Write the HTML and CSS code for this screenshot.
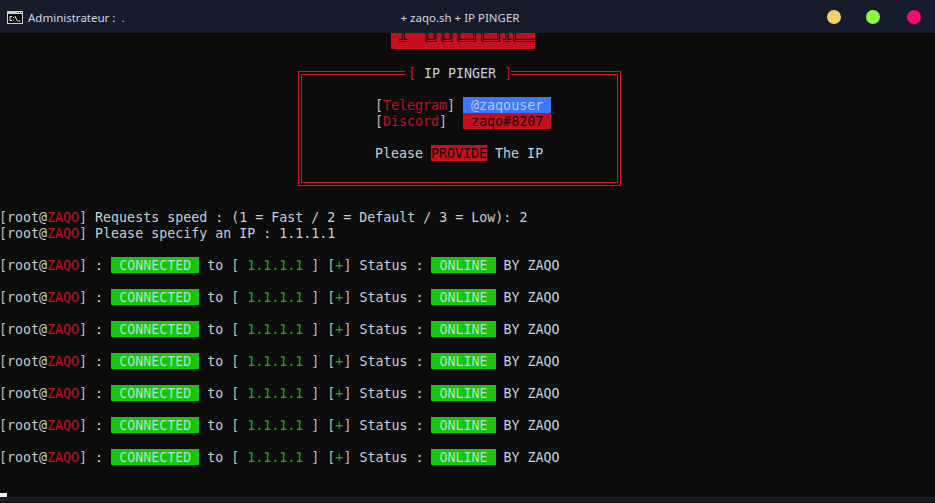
FILE: index.html
```html
<!DOCTYPE html>
<html lang="fr">
<head>
<meta charset="utf-8">
<title>zaqo.sh IP PINGER</title>
<link rel="stylesheet" href="styles.css">
</head>
<body>
<div class="window">
  <header class="titlebar">
    <div class="title-left">
      <svg class="cmd-icon" width="16" height="13" viewBox="0 0 16 13" aria-hidden="true">
        <rect x="0" y="0" width="16" height="13" fill="#d0d0d0"/>
        <rect x="1" y="3" width="14" height="9" fill="#0c0c0c"/>
        <rect x="10" y="1" width="1" height="1" fill="#333"/><rect x="12" y="1" width="1" height="1" fill="#333"/><rect x="14" y="1" width="1" height="1" fill="#333"/>
        <path d="M5 5.5H3V9.5H5M6.5 6V7M6.5 8.5V9.5M8 5L10 9.5M10.5 10H13.5" fill="none" stroke="#f0f0f0" stroke-width="1"/>
      </svg>
      <span>Administrateur :&nbsp; .</span>
    </div>
    <div class="title-center">+ zaqo.sh + IP PINGER</div>
    <div class="dots">
      <span class="dot dot-yellow"></span>
      <span class="dot dot-green"></span>
      <span class="dot dot-pink"></span>
    </div>
  </header>
  <main class="terminal">
    <div class="banner-row"><span class="banner"> ╩  ╚╝╚╝╚═╝╚═╝╩╚══ </span></div>
    <section class="frame">
      <div class="legend"><span class="red">[</span> IP PINGER <span class="red">]</span></div>
      <div class="line"><span class="tan">[</span><span class="dim">Telegram</span><span class="tan">]</span> <span class="tag tag-blue"> @zaqouser </span></div>
      <div class="line"><span class="tan">[</span><span class="dim">Discord</span><span class="tan">]</span>  <span class="tag tag-red"> zaqo#8207 </span></div>
      <div class="line blank"></div>
      <div class="line">Please <span class="tag tag-red">PROVIDE</span> The IP</div>
    </section>
    <div class="log">
      <div class="line"><span class="tan">[</span>root@<span class="dim">ZAQO</span><span class="tan">]</span> Requests speed : (1 = Fast / 2 = Default / 3 = Low): 2</div>
      <div class="line"><span class="tan">[</span>root@<span class="dim">ZAQO</span><span class="tan">]</span> Please specify an IP : 1.1.1.1</div>
    </div>
    <div class="log pings">
      <div class="line"><span class="tan">[</span>root@<span class="dim">ZAQO</span><span class="tan">]</span> : <span class="tag tag-green"> CONNECTED </span> to <span class="tan">[</span> <span class="ip">1.1.1.1</span> <span class="tan">]</span> <span class="tan">[</span><span class="ip">+</span><span class="tan">]</span> Status : <span class="tag tag-green"> ONLINE </span> BY ZAQO</div>
      <div class="line"><span class="tan">[</span>root@<span class="dim">ZAQO</span><span class="tan">]</span> : <span class="tag tag-green"> CONNECTED </span> to <span class="tan">[</span> <span class="ip">1.1.1.1</span> <span class="tan">]</span> <span class="tan">[</span><span class="ip">+</span><span class="tan">]</span> Status : <span class="tag tag-green"> ONLINE </span> BY ZAQO</div>
      <div class="line"><span class="tan">[</span>root@<span class="dim">ZAQO</span><span class="tan">]</span> : <span class="tag tag-green"> CONNECTED </span> to <span class="tan">[</span> <span class="ip">1.1.1.1</span> <span class="tan">]</span> <span class="tan">[</span><span class="ip">+</span><span class="tan">]</span> Status : <span class="tag tag-green"> ONLINE </span> BY ZAQO</div>
      <div class="line"><span class="tan">[</span>root@<span class="dim">ZAQO</span><span class="tan">]</span> : <span class="tag tag-green"> CONNECTED </span> to <span class="tan">[</span> <span class="ip">1.1.1.1</span> <span class="tan">]</span> <span class="tan">[</span><span class="ip">+</span><span class="tan">]</span> Status : <span class="tag tag-green"> ONLINE </span> BY ZAQO</div>
      <div class="line"><span class="tan">[</span>root@<span class="dim">ZAQO</span><span class="tan">]</span> : <span class="tag tag-green"> CONNECTED </span> to <span class="tan">[</span> <span class="ip">1.1.1.1</span> <span class="tan">]</span> <span class="tan">[</span><span class="ip">+</span><span class="tan">]</span> Status : <span class="tag tag-green"> ONLINE </span> BY ZAQO</div>
      <div class="line"><span class="tan">[</span>root@<span class="dim">ZAQO</span><span class="tan">]</span> : <span class="tag tag-green"> CONNECTED </span> to <span class="tan">[</span> <span class="ip">1.1.1.1</span> <span class="tan">]</span> <span class="tan">[</span><span class="ip">+</span><span class="tan">]</span> Status : <span class="tag tag-green"> ONLINE </span> BY ZAQO</div>
      <div class="line"><span class="tan">[</span>root@<span class="dim">ZAQO</span><span class="tan">]</span> : <span class="tag tag-green"> CONNECTED </span> to <span class="tan">[</span> <span class="ip">1.1.1.1</span> <span class="tan">]</span> <span class="tan">[</span><span class="ip">+</span><span class="tan">]</span> Status : <span class="tag tag-green"> ONLINE </span> BY ZAQO</div>
    </div>
    <div class="cursor-row"><span class="cursor"></span></div>
  </main>
  <div class="bottom-strip"></div>
</div>
</body>
</html>
```

FILE: styles.css
```css
* { box-sizing: border-box; }
html, body { margin: 0; height: 100%; background: #0c0c0c; overflow: hidden; }
.window { width: 935px; height: 503px; display: flex; flex-direction: column; overflow: hidden; background: #0c0c0c; }

.titlebar {
  flex: 0 0 33px;
  background: #171c2b;
  color: #cfd6e2;
  font: 11.5px "Noto Sans", "Liberation Sans", sans-serif;
  display: grid;
  grid-template-columns: 1fr auto 1fr;
  align-items: center;
}
.title-left { display: flex; align-items: center; gap: 5px; padding: 2px 0 0 7px; }
.title-center { padding: 2px 0 0 0; margin-left: -15px; }
.dots { display: flex; justify-content: flex-end; padding-right: 14px; padding-top: 1px; }
.dot { width: 14px; height: 14px; border-radius: 50%; display: block; }
.dot-yellow { background: #f3d16c; }
.dot-green { background: #8cfb3f; margin-left: 25px; }
.dot-pink { background: #fb0a71; margin-left: 27px; }

.terminal {
  flex: 1;
  font: 13.3px/18px "DejaVu Sans Mono", monospace;
  color: #c8d0d8;
  overflow: hidden;
  margin-left: -1px;
}
.line { height: 16px; white-space: pre; }
.legend { white-space: pre; }

.banner-row { height: 16px; padding-left: 392px; }
.banner {
  display: block;
  width: 144px;
  height: 16px;
  font-size: 13.28px;
  line-height: 16px;
  background: #c50f1f;
  color: #0c0c0c;
  white-space: pre;
}

.frame {
  width: 323px;
  height: 115px;
  margin: 22px 0 0 299px;
  border: 4px double #e01020;
  padding: 0 0 0 73px;
}
.legend {
  width: 106px;
  height: 16px;
  margin: -10px 0 16px 30px;
  padding-left: 3px;
  background: #0c0c0c;
}
.legend .red { color: #d01020; }

.log { margin-top: 23px; }
.pings { margin-top: 16px; }
.pings .line { margin-bottom: 16px; }

.tan { color: #c4bbae; }
.dim { color: #c50f1f; }
.ip { color: #18b018; }
.tag { display: inline-block; height: 16px; vertical-align: top; }
.tag-blue { background: #3b78ff; color: #bccbe8; }
.tag-red { background: #c50f1f; color: #0c0c0c; }
.tag-green { background: #16c60c; color: #b5e0c5; }

.cursor-row { height: 4px; margin-top: 28px; }
.cursor { display: block; width: 8px; height: 4px; background: #f2f2f2; }
.bottom-strip { flex: 0 0 6px; background: #171c2b; border-bottom: 1px solid #0c0c0c; }
```
